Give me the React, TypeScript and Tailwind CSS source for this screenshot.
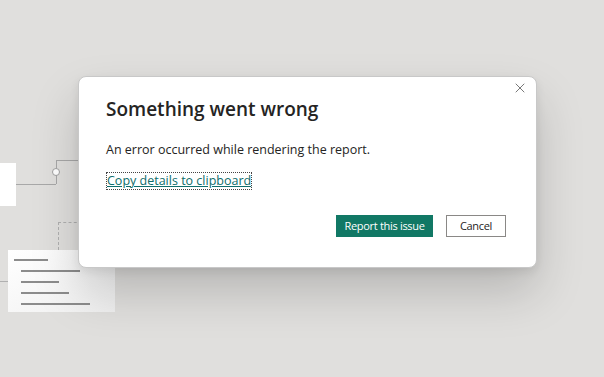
import { X } from "lucide-react";

const font = { fontFamily: '"Open Sans", "Noto Sans", sans-serif' };

function Canvas() {
  return (
    <>
      {/* top-left node */}
      <div className="absolute left-0 top-[163px] h-[43px] w-[16px] bg-white" />
      <div className="absolute left-[16px] top-[184px] h-px w-[40px] bg-[#a8a8a8]" />
      <div className="absolute left-[56px] top-[160px] h-[24px] w-px bg-[#a8a8a8]" />
      <div className="absolute left-[56px] top-[160px] h-px w-[30px] bg-[#a8a8a8]" />
      <div className="absolute left-[52px] top-[168px] h-[8px] w-[8px] rounded-full border border-[#a0a0a0] bg-white" />

      {/* dashed connector */}
      <div className="absolute left-[58px] top-[222px] h-[28px] w-0 border-l border-dashed border-[#b0b0b0]" />
      <div className="absolute left-[58px] top-[222px] h-0 w-[24px] border-t border-dashed border-[#b0b0b0]" />

      {/* lower node */}
      <div className="absolute left-0 top-[281px] h-px w-[8px] bg-[#b0b0b0]" />
      <div className="absolute left-[8px] top-[250px] flex h-[62px] w-[107px] flex-col gap-[9px] bg-gradient-to-br from-white to-[#efefef] pl-[6px] pt-[9px]">
        <div className="h-[2px] w-[34px] bg-[#8c8c8c]" />
        <div className="ml-[7px] h-[2px] w-[59px] bg-[#8c8c8c]" />
        <div className="ml-[7px] h-[2px] w-[38px] bg-[#8c8c8c]" />
        <div className="ml-[7px] h-[2px] w-[48px] bg-[#8c8c8c]" />
        <div className="ml-[7px] h-[2px] w-[69px] bg-[#8c8c8c]" />
      </div>
    </>
  );
}

export default function App() {
  return (
    <div className="relative h-[377px] w-[604px] overflow-hidden bg-[#e0dfdd]" style={font}>
      <Canvas />

      <div className="absolute left-[78px] top-[76px] flex h-[192px] w-[459px] flex-col rounded-[8px] border border-[#c8c8c8] bg-white pl-[27px] pr-[30px] pt-[18px] shadow-[0_24px_48px_rgba(0,0,0,0.18),0_4px_10px_rgba(0,0,0,0.08)]">
        <button className="absolute right-[8px] top-[3px] text-[#555]">
          <X size={16} strokeWidth={1.2} />
        </button>
        <h1 className="text-[19px] font-semibold leading-[28px] text-[#252423]">Something went wrong</h1>
        <p className="mt-[18px] text-[12.5px] leading-[18px] text-[#252423]">
          An error occurred while rendering the report.
        </p>
        <div className="mt-[8px]">
          <a className="inline-block border border-dotted border-[#444] text-[12.5px] leading-[16px] text-[#0e6d6b] underline">
            Copy details to clipboard
          </a>
        </div>
        <div className="mt-[24px] flex justify-end gap-[13px]">
          <button className="h-[22px] w-[97px] bg-[#117865] text-[11px] tracking-[-0.3px] text-white">Report this issue</button>
          <button className="h-[22px] w-[60px] border border-[#8a8886] bg-white text-[11px] tracking-[-0.3px] text-[#252423]">Cancel</button>
        </div>
      </div>
    </div>
  );
}
